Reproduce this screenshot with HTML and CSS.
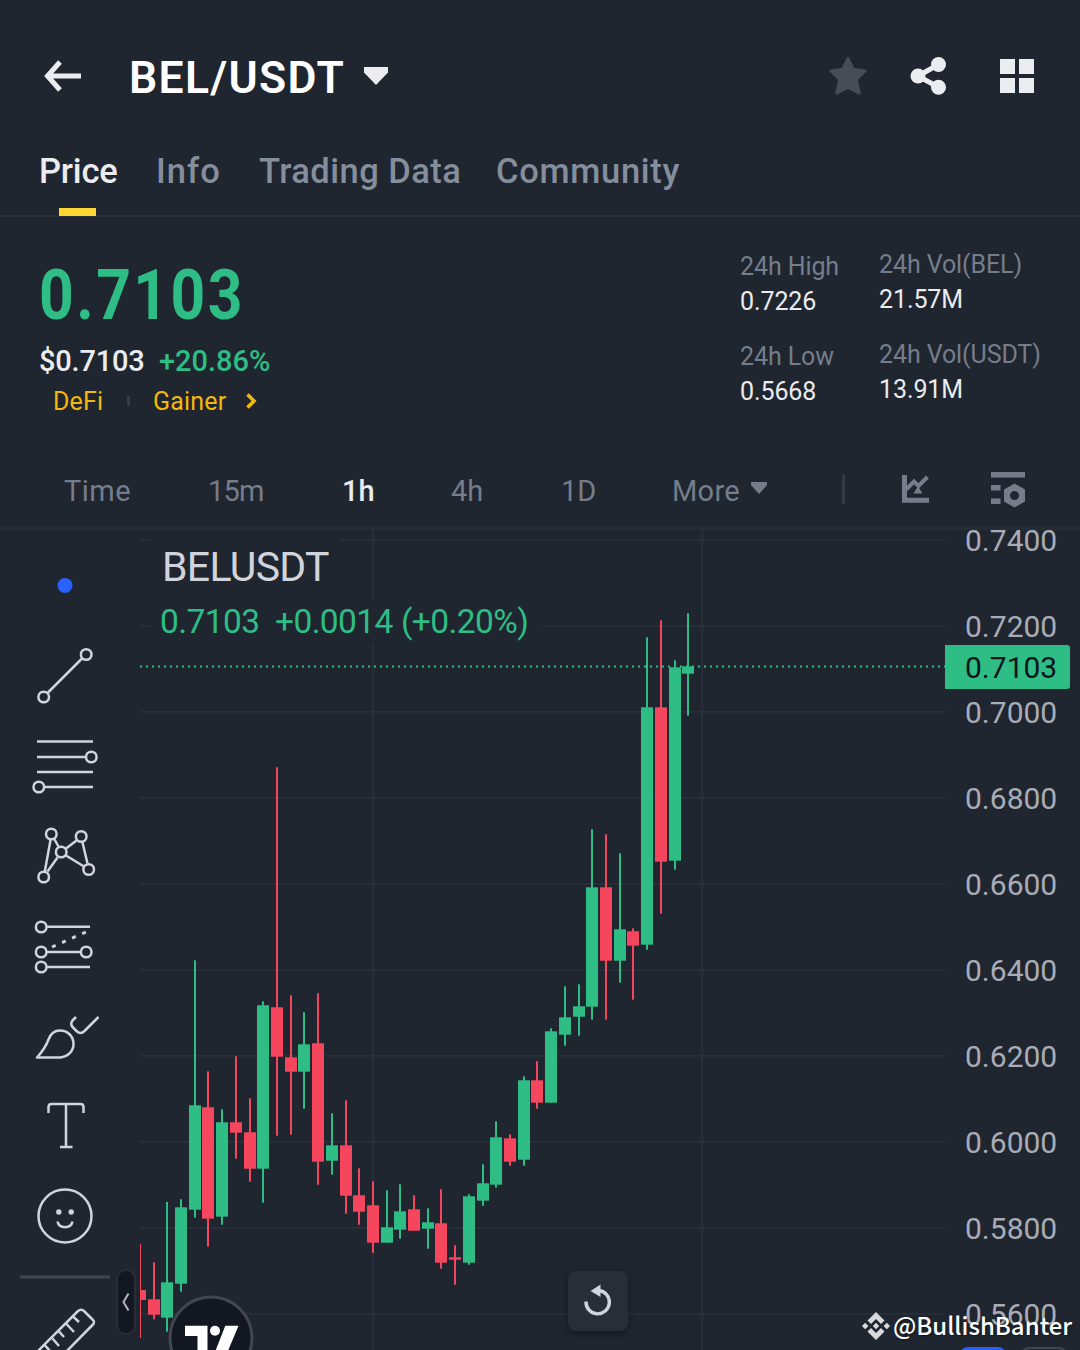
FILE: index.html
```html
<!DOCTYPE html>
<html lang="en">
<head>
<meta charset="utf-8">
<title>BEL/USDT</title>
<link rel="stylesheet" href="styles.css">
</head>
<body>
<div class="app">
  <header class="header">
    <svg class="back" width="38" height="32" viewBox="0 0 38 32"><path d="M37 16H4M16 2 3.500 16 16 30" fill="none" stroke="#eaecef" stroke-width="5"/></svg>
    <h1 class="pair">BEL/USDT</h1>
    <svg class="pair-caret" width="24" height="18" viewBox="0 0 24 18"><path d="M0 0H24V5.500L12 18 0 5.500Z" fill="#eaecef"/></svg>
    <div class="actions">
      <svg width="38" height="40" viewBox="0 0 38 40"><path d="M19 2.500 24.200 13.300 36 15 27.300 23.400 30.200 36.800 19 31.500 7.800 36.800 10.700 23.400 2 15 13.800 13.300Z" fill="#474d57" stroke="#474d57" stroke-width="3" stroke-linejoin="round"/></svg>
      <svg width="37" height="40" viewBox="0 0 37 40"><g fill="#eaecef"><circle cx="28.500" cy="8.500" r="7.500"/><circle cx="8" cy="20" r="7.500"/><circle cx="28.500" cy="31.300" r="7.500"/></g><path d="M28.500 8.500 8 20 28.500 31.300" fill="none" stroke="#eaecef" stroke-width="5"/></svg>
      <svg width="34" height="36" viewBox="0 0 34 36"><path d="M0 1H15V16H0ZM19 1H34V16H19ZM0 20H15V35H0ZM19 20H34V35H19Z" fill="#eaecef"/></svg>
    </div>
  </header>

  <nav class="tabs">
    <a class="tab tab-active">Price</a>
    <a class="tab tab-info">Info</a>
    <a class="tab tab-trading">Trading Data</a>
    <a class="tab tab-community">Community</a>
  </nav>

  <section class="summary">
    <div class="quote">
      <div class="last">0.7103</div>
      <div class="fiat"><span class="usd">$0.7103</span><span class="change">+20.86%</span></div>
      <div class="tags">
        <span class="tag-defi">DeFi</span><i class="tag-sep"></i><span class="tag-gainer">Gainer</span>
        <svg width="11" height="16" viewBox="0 0 11 16"><path d="M1.500 1.500 8 8 1.500 14.500" fill="none" stroke="#f0b90b" stroke-width="3.600"/></svg>
      </div>
    </div>
    <dl class="stats stats-price">
      <dt>24h High</dt><dd>0.7226</dd>
      <dt>24h Low</dt><dd>0.5668</dd>
    </dl>
    <dl class="stats stats-volume">
      <dt>24h Vol(BEL)</dt><dd>21.57M</dd>
      <dt>24h Vol(USDT)</dt><dd>13.91M</dd>
    </dl>
  </section>

  <nav class="intervals">
    <span class="int int-time">Time</span>
    <span class="int int-15m">15m</span>
    <span class="int int-1h">1h</span>
    <span class="int int-4h">4h</span>
    <span class="int int-1d">1D</span>
    <span class="int int-more">More</span>
    <svg class="more-caret" width="16" height="12" viewBox="0 0 16 12"><path d="M0 0H16V3L8 12 0 3Z" fill="#767d8a"/></svg>
    <i class="int-sep"></i>
    <svg class="depth" width="27" height="28" viewBox="0 0 27 28"><g fill="none" stroke="#767d8a"><path d="M2.500 0V25.300H27" stroke-width="5"/><path d="M4 14.500 12 6.500 16.500 11 25.500 2" stroke-width="4"/></g><path d="M16 11 20.500 18.500H11.500Z" fill="#767d8a"/></svg>
    <svg class="settings" width="35" height="37" viewBox="0 0 35 37"><path d="M0 1H34V6.500H0ZM0 14H9.500V19.500H0ZM0 27.500H9.500V33H0Z" fill="#767d8a"/><path fill-rule="evenodd" d="M23.500 12.500 34 18.500V30.500L23.500 36.500 13 30.500V18.500ZM23.500 20A4.500 4.500 0 1 0 23.500 29 4.500 4.500 0 1 0 23.500 20Z" fill="#767d8a"/></svg>
  </nav>

  <main class="chart">
    <div class="tools">
      <svg class="tool" viewBox="0 541 140 90"><circle cx="65" cy="585.500" r="7.500" fill="#2962ff" stroke="none"/></svg>
      <svg class="tool" viewBox="0 631 140 90"><path d="M48 692.500 82 658.500"/><circle cx="43.700" cy="697" r="5.300"/><circle cx="86.200" cy="654.500" r="5.300"/></svg>
      <svg class="tool" viewBox="0 721 140 90"><path d="M37 741.500H93M37 757H85M37 772H93M45 787H93"/><circle cx="91.300" cy="757" r="5.300"/><circle cx="38.800" cy="787" r="5.300"/></svg>
      <svg class="tool" viewBox="0 811 140 90"><path d="M50.500 840 44.800 871.500M54 838.500 58.500 846.500M66 848.500 76.500 840.500M57.500 857.500 47.500 871.500M66 855.500 84 866.500M82.500 842.500 87.500 863.500"/><circle cx="51.300" cy="834" r="5.300"/><circle cx="81.200" cy="836.500" r="5.300"/><circle cx="61.200" cy="852" r="5.300"/><circle cx="43.700" cy="877" r="5.300"/><circle cx="88.700" cy="869.500" r="5.300"/></svg>
      <svg class="tool" viewBox="0 901 140 90"><path d="M47 926.800H90M47 952H80M47 967H90"/><path d="M52 947 87 931.500" stroke-width="3" stroke-dasharray="4 7"/><circle cx="41.200" cy="927" r="5.300"/><circle cx="41.200" cy="952" r="5.300"/><circle cx="86.200" cy="952" r="5.300"/><circle cx="41.200" cy="967" r="5.300"/></svg>
      <svg class="tool" viewBox="0 991 140 90"><path stroke-linejoin="round" d="M37 1057.500H60C68 1057 73.500 1051 73.500 1044 73.500 1036 67.500 1030.500 60 1030.500 54 1030.500 50.500 1034 48.500 1039.500 46.500 1045 42 1052 37 1057.500ZM76 1017 72.500 1020.500Q70 1023.500 72.500 1027L76.500 1031Q80.500 1035 84.500 1031L98.500 1017"/></svg>
      <svg class="tool" viewBox="0 1081 140 90"><path d="M48.500 1113V1107Q48.500 1104 51.500 1104H80.500Q83.500 1104 83.500 1107V1113M66 1104V1147M60 1147H72.500"/></svg>
      <svg class="tool" viewBox="0 1171 140 90"><circle cx="65" cy="1216" r="26.500"/><path d="M57.500 1221.500C59 1229 71 1229 72.500 1221.500"/><g fill="#d1d4dc" stroke="none"><circle cx="58.800" cy="1212" r="2.700"/><circle cx="71.200" cy="1212" r="2.700"/></g></svg>
      <svg class="tool" viewBox="0 1261 140 90"><path class="divider" d="M20 1277H110"/><path d="M35 1354 78 1311Q81 1308.500 84 1311L92.500 1319.500Q95.500 1322 92.500 1325L60 1358M73.500 1317 79 1322M66.500 1324 74 1332M59 1331.500 64 1337M52.500 1338.500 59 1346M45 1345.500 51 1352"/></svg>
    </div>
    <div class="plot">
      <svg class="candles" width="805" height="824" viewBox="140 526 805 824"></svg>
      <div class="legend">
        <div class="legend-name">BELUSDT</div>
        <div class="legend-values"><span class="v-last">0.7103</span><span class="v-diff">+0.0014</span><span class="v-pct">(+0.20%)</span></div>
      </div>
      <svg class="tv" width="86" height="60" viewBox="168 1290 86 60"><circle cx="211" cy="1338" r="41" fill="#131722" stroke="#434651" stroke-width="3"/><path d="M185 1325.700H207.500V1352H197.500V1336H185ZM225.300 1325.700H238.500L227.500 1352H215Z" fill="#fff"/><circle cx="215" cy="1330.700" r="5" fill="#fff"/></svg>
      <div class="reset"><svg width="30" height="34" viewBox="0 0 30 34"><path d="M3 17.500A11.700 11.700 0 1 0 16 6.500" fill="none" stroke="#d1d4dc" stroke-width="3.400"/><path d="M17.500 .5V13L7.500 7Z" fill="#d1d4dc"/></svg></div>
    </div>
    <div class="axis">
      <span>0.7400</span><span>0.7200</span><span>0.7000</span><span>0.6800</span><span>0.6600</span><span>0.6400</span><span>0.6200</span><span>0.6000</span><span>0.5800</span><span>0.5600</span>
      <div class="price-tag">0.7103</div>
      <i class="pill pill-blue"></i><i class="pill pill-line"></i>
    </div>
    <div class="handle"><svg width="10" height="20" viewBox="0 0 10 20"><path d="M7.500 1.500 2.500 10 7.500 18.500" fill="none" stroke="#b2b5be" stroke-width="2"/></svg></div>
  </main>

  <div class="credit">
    <svg width="28" height="28" viewBox="0 0 28 28"><path d="M14 0 22.500 8.500 19 12 14 7 9 12 5.500 8.500ZM14 28 22.500 19.500 19 16 14 21 9 16 5.500 19.500ZM3.200 10.800 6.400 14 3.200 17.200 0 14ZM24.800 10.800 28 14 24.800 17.200 21.600 14ZM14 10.800 17.200 14 14 17.200 10.800 14Z" fill="#d9dadc"/></svg>
    <span>@BullishBanter</span>
  </div>
</div>
<script src="chart.js"></script>
</body>
</html>
```
FILE: styles.css
```css
* { box-sizing: border-box; }
body { margin: 0; background: #202630; }
.app {
  position: relative;
  width: 1080px;
  height: 1350px;
  overflow: hidden;
  background: #202630;
  color: #eaecef;
  font-family: Roboto, "Noto Sans", sans-serif;
  white-space: nowrap;
}
svg { display: block; flex: none; }

.header { display: flex; align-items: center; height: 152px; padding: 0 46px 0 44px; }
.pair { flex: none; margin: 4px 0 0 47px; width: 217px; font-size: 44.5px; line-height: 60px; font-weight: 600; color: #fff; letter-spacing: 1.3px; }
.pair-caret { margin-left: 18px; }
.actions { display: flex; align-items: center; margin-left: auto; }
.actions svg:nth-child(2) { margin-left: 43px; }
.actions svg:nth-child(3) { margin-left: 53px; }

.tabs { display: flex; height: 65px; padding-left: 39px; border-bottom: 2px solid #29303a; font-size: 34.5px; line-height: 38px; font-weight: 500; color: #848e9c; }
.tab { position: relative; flex: none; width: 117px; letter-spacing: 0.7px; }
.tab-active { color: #eaecef; letter-spacing: -0.2px; }
.tab-active::after { content: ""; position: absolute; left: 20px; top: 56px; width: 37px; height: 8px; background: #fcd535; }
.tab-info { width: 103px; letter-spacing: 1px; }
.tab-trading { width: 237px; letter-spacing: 0.45px; }

.summary { display: flex; height: 235px; }
.quote { width: 740px; padding: 36px 0 0 39px; }
.last { height: 82px; font-size: 70px; line-height: 84px; font-weight: 700; letter-spacing: 2.8px; color: #2ebd85; transform: scaleX(0.865); transform-origin: 0 0; }
.fiat { display: flex; height: 46px; padding-top: 6px; font-size: 29px; line-height: 40px; font-weight: 500; }
.usd { width: 120px; letter-spacing: -0.2px; }
.change { color: #2ebd85; }
.tags { display: flex; align-items: center; height: 40px; padding-left: 14px; font-size: 25px; line-height: 34px; color: #f0b90b; }
.tags span { padding-top: 2px; letter-spacing: 0.2px; }
.tag-defi { width: 74px; }
.tag-sep { width: 3px; height: 10px; margin-right: 23px; background: #363c47; }
.tag-gainer { width: 93px; }
.stats { margin: 0; padding-top: 32px; width: 139px; font-size: 25px; line-height: 35px; }
.stats-volume { padding-top: 30px; }
.stats dt { color: #757d8b; letter-spacing: -0.1px; }
.stats dd { margin: 0 0 20px; letter-spacing: -0.1px; }

.intervals { display: flex; align-items: center; height: 78px; padding-left: 64px; border-bottom: 3px solid #262c36; font-size: 29px; line-height: 36px; color: #757d8b; }
.int { flex: none; padding-top: 3px; }
.int-time { width: 144px; letter-spacing: 0.5px; }
.int-15m { width: 134px; letter-spacing: -0.8px; }
.int-1h { width: 109px; color: #eaecef; font-weight: 500; }
.int-4h { width: 110px; }
.int-1d { width: 111px; }
.int-more { width: 79px; letter-spacing: 0.3px; }
.more-caret { margin-top: -3px; }
.int-sep { width: 3px; height: 30px; margin: -1px 0 0 75px; background: #343a45; }
.depth { margin: -2px 0 0 57px; }
.settings { margin: -1px 0 0 62px; }

.chart { position: relative; display: flex; height: 824px; margin-top: -4px; }
.tools { flex: none; width: 140px; padding-top: 15px; }
.tool { width: 140px; height: 90px; fill: none; stroke: #d1d4dc; stroke-width: 2.5; }
.divider { stroke: #434651; stroke-width: 3; }
.plot { position: relative; flex: none; width: 805px; }
.legend { position: absolute; left: 10px; top: 13px; }
.legend-name { width: 190px; height: 56px; padding-left: 12px; background: #202630; font-size: 41px; line-height: 56px; letter-spacing: -0.7px; color: #d1d4dc; }
.legend-values { display: flex; width: 393px; height: 43px; margin-top: 5px; padding-left: 10px; background: #202630; font-size: 33.5px; line-height: 43px; letter-spacing: -0.6px; color: #2ebd85; }
.v-last { width: 115px; }
.v-diff { width: 126px; }
.tv { position: absolute; left: 28px; bottom: 0; }
.reset { position: absolute; left: 428px; top: 745px; display: flex; align-items: center; justify-content: center; width: 60px; height: 60px; border-radius: 8px; background: #282d37; box-shadow: 0 3px 8px rgba(10, 13, 20, .55); }
.axis { position: relative; display: flex; flex-direction: column; flex: none; width: 135px; gap: 57px; padding-left: 20px; font-size: 30px; line-height: 29px; color: #a9acb6; }
.axis span { height: 29px; }
.price-tag { position: absolute; left: 0; top: 119px; width: 125px; height: 44px; padding-left: 20px; border-radius: 0 3px 3px 0; background: #2ebd85; color: #10151d; line-height: 45px; }
.pill { position: absolute; top: 821px; height: 30px; width: 46px; border-radius: 8px; }
.pill-blue { left: 15px; background: #2962ff; }
.pill-line { left: 76px; border: 2px solid #434651; }
.handle { position: absolute; left: 116px; top: 743px; display: flex; align-items: center; justify-content: center; width: 20px; height: 66px; border: 2px solid #282d38; border-radius: 10px; background: #131722; }

.credit { position: absolute; left: 862px; top: 1308px; display: flex; align-items: center; height: 36px; gap: 3px; font: 500 24px/34px "Noto Sans CJK SC", sans-serif; color: #fff; }
.credit span { margin-top: -3px; text-shadow: 1px 1px 2px rgba(0, 0, 0, .5); }

.grid { fill: #2a303a; }
.up { fill: #2ebd85; }
.down { fill: #f6465d; }
```
FILE: chart.js
```js
// Each candle: body left edge, high, body top, body bottom, low, direction (1 up, 0 down)
const candles = [
  [134, 1244, 1290, 1300, 1338, 0], [148, 1262.3, 1299.3, 1314.7, 1319.3, 0],
  [161, 1202, 1282.3, 1317.7, 1331.7, 1], [175, 1199.3, 1207.3, 1283.7, 1291.7, 1],
  [189, 960.3, 1105.3, 1209.7, 1217.7, 1], [202, 1071.3, 1107.3, 1218.7, 1246.7, 0],
  [216, 1109.3, 1122.3, 1216.7, 1224.7, 1], [230, 1056.3, 1122.3, 1132.7, 1158.7, 0],
  [244, 1098.3, 1132.3, 1168.7, 1181.7, 0], [257, 1001.3, 1005.3, 1168.7, 1202.7, 1],
  [271, 767.3, 1007.3, 1056.7, 1135.7, 0], [285, 995.3, 1057.3, 1071.7, 1134.7, 0],
  [298, 1012.3, 1044.3, 1071.7, 1108.7, 1], [312, 993.3, 1043.3, 1161.7, 1184.7, 0],
  [326, 1113.3, 1145.3, 1160.7, 1174.7, 1], [340, 1100.3, 1145.3, 1195.7, 1213.7, 0],
  [353, 1168.3, 1195.3, 1211.7, 1224.7, 0], [367, 1181.3, 1205.3, 1242.7, 1252.7, 0],
  [381, 1190.3, 1227.3, 1242.7, 1242.7, 1], [394, 1184.3, 1211.3, 1229.7, 1238.7, 1],
  [408, 1195.3, 1209.3, 1230.7, 1230.7, 0], [422, 1208.3, 1222.3, 1228.7, 1248.7, 1],
  [435, 1189.3, 1223.3, 1262.7, 1268.7, 0], [449, 1245.3, 1257.3, 1259.7, 1284.7, 0],
  [463, 1194.3, 1196.3, 1262.7, 1264.7, 1], [477, 1164.3, 1183.3, 1200.7, 1205.7, 1],
  [490, 1121.3, 1137.3, 1184.7, 1187.7, 1], [504, 1134.3, 1138.3, 1161.7, 1165.7, 0],
  [518, 1076.3, 1080.3, 1159.7, 1165.7, 1], [531, 1061.3, 1080.3, 1102.7, 1108.7, 0],
  [545, 1028.3, 1031.3, 1102.7, 1102.7, 1], [559, 986.3, 1017.3, 1034.7, 1045.7, 1],
  [573, 984.3, 1006.3, 1016.7, 1035.7, 1], [586, 829.3, 887.3, 1006.7, 1019.7, 1],
  [600, 834.3, 887.3, 960.7, 1019.7, 0], [614, 853.3, 929.3, 960.7, 982.7, 1],
  [627, 928.3, 931.3, 945.7, 999.7, 0], [641, 637.3, 707.3, 944.7, 949.7, 1],
  [655, 620.3, 707.3, 861.7, 913.7, 0], [669, 660.3, 667.3, 860.7, 869.7, 1],
  [682, 613.3, 666.3, 673.7, 715.7, 1]
];

const svg = document.querySelector(".candles");
const rect = (x, y, w, h, cls) => {
  const el = document.createElementNS("http://www.w3.org/2000/svg", "rect");
  Object.entries({ x, y, width: w, height: h, class: cls }).forEach(([k, v]) => el.setAttribute(k, v));
  svg.append(el);
};

for (let i = 0; i < 10; i++) rect(140, 539 + i * 86, 805, 1.6, "grid");
for (const x of [372, 701.3]) rect(x, 526, 1.8, 824, "grid");
for (let x = 140; x < 945; x += 6) rect(x, 665.5, 2, 2, "up");
for (const [x, high, top, bottom, low, up] of candles) {
  const cls = up ? "up" : "down";
  rect(x + 5, high, 2, low - high, cls);
  rect(x, top, 12, bottom - top, cls);
}
```
